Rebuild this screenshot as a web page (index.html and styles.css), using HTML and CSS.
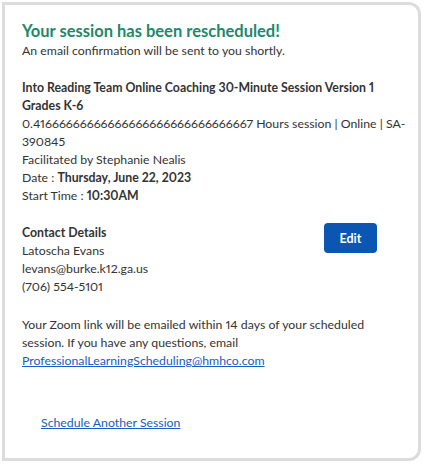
FILE: index.html
```html
<!DOCTYPE html>
<html>
<head>
<meta charset="utf-8">
<link rel="stylesheet" href="styles.css">
</head>
<body>
<div class="card">
  <h1 class="title">Your session has been rescheduled!</h1>
  <p class="line">An email confirmation will be sent to you shortly.</p>

  <div class="block">
    <p class="line strong">Into Reading Team Online Coaching 30-Minute Session Version 1 Grades K-6</p>
    <p class="line">0.41666666666666666666666666666667 Hours session | Online | SA-390845</p>
    <p class="line">Facilitated by Stephanie Nealis</p>
    <p class="line">Date : <b>Thursday, June 22, 2023</b></p>
    <p class="line">Start Time : <b>10:30AM</b></p>
  </div>

  <div class="contact">
    <div class="contact-info">
      <p class="line strong">Contact Details</p>
      <p class="line">Latoscha Evans</p>
      <p class="line">levans@burke.k12.ga.us</p>
      <p class="line">(706) 554-5101</p>
    </div>
    <button class="edit">Edit</button>
  </div>

  <p class="line zoom">Your Zoom link will be emailed within 14 days of your scheduled session. If you have any questions, email <a href="#">ProfessionalLearningScheduling@hmhco.com</a></p>

  <a class="another" href="#">Schedule Another Session</a>
</div>
</body>
</html>
```

FILE: styles.css
```css
html, body {
  margin: 0;
  padding: 0;
  background: #ffffff;
}
body {
  font-family: Lato, "Noto Sans", sans-serif;
  font-variant-numeric: proportional-nums;
  color: #333333;
  padding: 2px 5px 3px 2px;
}
.card {
  border: 3px solid #dcdcdc;
  border-radius: 0 12px 12px 0;
  height: 459px;
  box-sizing: border-box;
  padding: 15px 10px 0 17px;
}
.title {
  margin: 0;
  font-size: 16.5px;
  line-height: 22px;
  font-weight: 700;
  color: #1a8a6c;
}
.line {
  margin: 0;
  font-size: 12.3px;
  line-height: 18px;
}
.line b {
  font-size: inherit;
}
.strong {
  font-weight: 700;
}
.block {
  margin-top: 19px;
}
.contact {
  margin-top: 19px;
  display: flex;
  align-items: flex-start;
}
.contact-info {
  flex: 1;
}
.edit {
  margin-top: -1px;
  margin-right: 31px;
  width: 53px;
  height: 30px;
  border: none;
  border-radius: 4px;
  background: #0b55b3;
  color: #ffffff;
  font-family: inherit;
  font-size: 12.5px;
  font-weight: 700;
}
.zoom {
  margin-top: 20px;
}
a {
  color: #1a5bc7;
  text-decoration: underline;
}
.another {
  display: inline-block;
  margin-top: 44px;
  margin-left: 19px;
  font-size: 12.3px;
  line-height: 18px;
}
```
